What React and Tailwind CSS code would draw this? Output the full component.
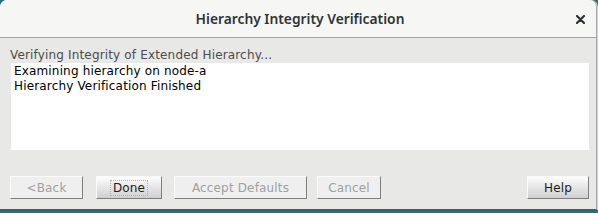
import React from "react";

const font = { fontFamily: '"DejaVu Sans", "Liberation Sans", sans-serif' };

const WizardButton = ({ label, disabled, focused, className = "" }) => {
  return (
    <button
      type="button"
      disabled={disabled}
      className={
        "h-[23px] flex items-center justify-center border border-t-[#fafafa] border-l-[#fafafa] border-r-[#7e7e7e] border-b-[#7e7e7e] text-[12px] tracking-[0.16px] leading-none " +
        (disabled
          ? "bg-[#efefef] text-[#a0a0a0] "
          : "bg-gradient-to-b from-[#fdfdfd] to-[#cfcfcf] text-[#1c1c1c] ") +
        className
      }
    >
      {focused ? (
        <span className="px-[2px] py-[1px] border border-dotted border-[#b0b0b0]">{label}</span>
      ) : (
        label
      )}
    </button>
  );
};

export default function App() {
  return (
    <div className="w-[598px] h-[213px] bg-[#2b6c79] overflow-hidden" style={font}>
      <div className="w-[597px] h-[210px] flex flex-col bg-[#e8e8e7] rounded-t-[7px] border-r border-r-[#a8a8a8] border-b border-b-[#555] shadow-[1px_0_0_#d4d4d4]">
        {/* title bar */}
        <div className="h-[38px] shrink-0 flex items-center justify-center relative bg-[#f6f6f5] rounded-t-[7px] border-b border-[#a3a3a3]">
          <span
            className="text-[13.8px] font-semibold text-[#2e3436] pt-[1px] pl-[4px]"
            style={{ fontFamily: '"Noto Sans", "DejaVu Sans", sans-serif' }}
          >
            Hierarchy Integrity Verification
          </span>
          <svg
            className="absolute right-[11px] top-[15px]"
            width="9"
            height="9"
            viewBox="0 0 9 9"
          >
            <path d="M1 1L8 8M8 1L1 8" stroke="#2e3436" strokeWidth="2.2" strokeLinecap="round" />
          </svg>
        </div>

        {/* content */}
        <div className="flex-1 flex flex-col pt-[9px]">
          <div className="pl-[10px] text-[12px] tracking-[0.16px] leading-[16px] text-[#4c4c4c]">
            Verifying Integrity of Extended Hierarchy...
          </div>
          <div className="ml-[11px] w-[578px] h-[87px] bg-white pl-[3px] pt-[1px] text-[12px] tracking-[0.16px] leading-[15px] text-black">
            <div>Examining hierarchy on node-a</div>
            <div>Hierarchy Verification Finished</div>
          </div>

          <div className="flex items-center mt-[26px] pl-[10px]">
            <WizardButton label="<Back" disabled className="w-[73px]" />
            <WizardButton label="Done" focused className="w-[66px] ml-[13px]" />
            <WizardButton label="Accept Defaults" disabled className="w-[133px] ml-[12px]" />
            <WizardButton label="Cancel" disabled className="w-[64px] ml-[10px]" />
            <WizardButton label="Help" className="w-[62px] ml-auto mr-[7px]" />
          </div>
        </div>
      </div>
    </div>
  );
}
